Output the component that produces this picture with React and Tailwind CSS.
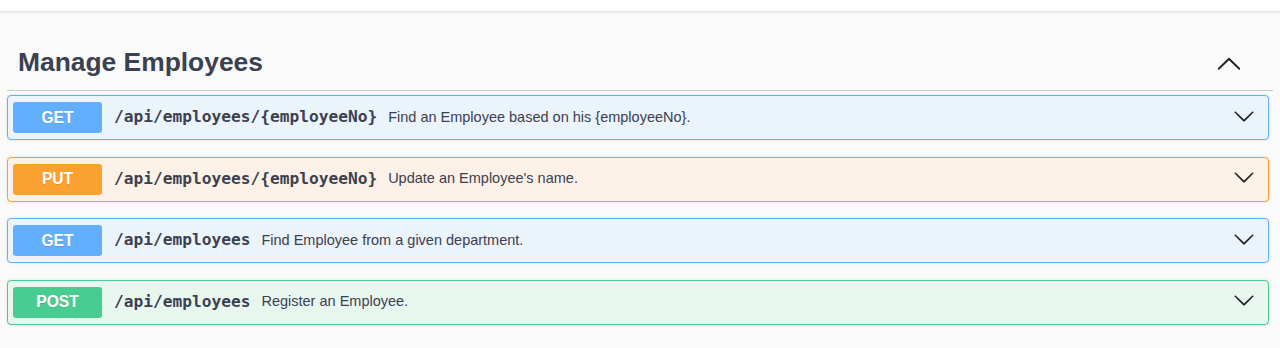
import React from "react";

const ops = [
  {
    method: "GET",
    path: "/api/employees/{employeeNo}",
    summary: "Find an Employee based on his {employeeNo}.",
    block: "bg-[#ebf3fb] border-[#61affe]",
    badge: "bg-[#61affe]",
  },
  {
    method: "PUT",
    path: "/api/employees/{employeeNo}",
    summary: "Update an Employee's name.",
    block: "bg-[#fbf1e6] border-[#fca130]",
    badge: "bg-[#fca130]",
  },
  {
    method: "GET",
    path: "/api/employees",
    summary: "Find Employee from a given department.",
    block: "bg-[#ebf3fb] border-[#61affe]",
    badge: "bg-[#61affe]",
  },
  {
    method: "POST",
    path: "/api/employees",
    summary: "Register an Employee.",
    block: "bg-[#e8f6f0] border-[#49cc90]",
    badge: "bg-[#49cc90]",
  },
];

function ArrowDown() {
  return (
    <svg width="22" height="22" viewBox="0 0 20 20" fill="#222">
      <path d="M17.418 6.109c.272-.268.709-.268.979 0s.271.701 0 .969l-7.908 7.83c-.27.268-.707.268-.979 0l-7.908-7.83c-.27-.268-.27-.701 0-.969.271-.268.709-.268.979 0L10 13.25l7.418-7.141z" />
    </svg>
  );
}

function ArrowUp() {
  return (
    <svg width="26" height="26" viewBox="0 0 20 20" fill="#222">
      <path d="M17.418 14.908c.272.268.709.268.979 0s.271-.701 0-.969l-7.908-7.83a.697.697 0 0 0-.979 0l-7.908 7.83c-.27.268-.27.701 0 .969.271.268.709.268.979 0L10 7.83l7.418 7.078z" />
    </svg>
  );
}

export default function App() {
  return (
    <div className="w-[1280px] h-[348px] bg-[#fafafa] font-['Liberation_Sans',Arial,sans-serif] text-[#3b4151] overflow-hidden">
      {/* top bar */}
      <div className="h-[12px] bg-white border-b border-[#e3e3e3] shadow-[0_1px_2px_rgba(0,0,0,0.08)]" />

      <div className="px-[7px] pt-[23px]">
        {/* Tag heading */}
        <div className="flex items-center justify-between h-[56px] border-b border-[#c8c9cd] pl-[11px] pr-[31px]">
          <h3 className="text-[26.4px] font-bold leading-none">Manage Employees</h3>
          <ArrowUp />
        </div>

        {/* Operations */}
        <div className="pt-[4px] w-[1262px]">
          {ops.map((op, i) => (
            <div
              key={i}
              className={`flex items-center h-[45px] mb-[16.5px] border rounded-[4px] px-[5px] shadow-[0_0_3px_rgba(0,0,0,0.12)] ${op.block}`}
            >
              <span
                className={`w-[89px] h-[31px] flex items-center justify-center rounded-[3px] text-white font-bold text-[15.6px] [text-shadow:0_1px_0_rgba(0,0,0,0.1)] ${op.badge}`}
              >
                {op.method}
              </span>
              <span className="pl-[12px] pr-[11px] font-['DejaVu_Sans_Mono',monospace] font-bold text-[16.2px] text-[#3b4151]">
                {op.path}
              </span>
              <span className="flex-1 text-[14.5px] text-[#3b4151]">{op.summary}</span>
              <span className="mr-[8px] mb-[4px] flex items-center">
                <ArrowDown />
              </span>
            </div>
          ))}
        </div>
      </div>
    </div>
  );
}
